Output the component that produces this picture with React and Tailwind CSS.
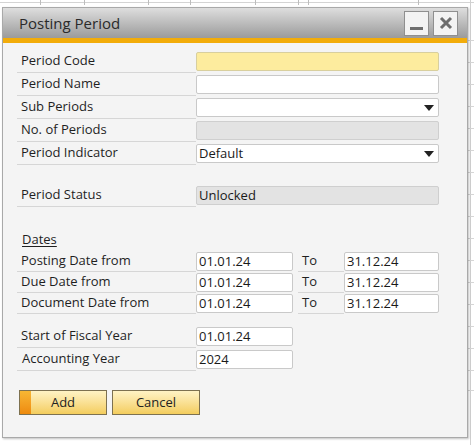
import React from 'react';

const font = { fontFamily: '"Open Sans", "Noto Sans", sans-serif' };

const Caret = () => (
    <svg width="10" height="6" viewBox="0 0 10 6" className="absolute right-[4px] top-1/2 -translate-y-1/2">
        <path d="M0 0 H10 L5 6 Z" fill="#222" />
    </svg>
);

const Field = ({ value, tone = 'white', select, className = '' }) => {
    const bg =
        tone === 'yellow' ? 'bg-[#fdec9e] border-[#d8cf9e]' : tone === 'gray' ? 'bg-[#e3e3e3] border-[#cfcfcf]' : 'bg-white border-[#c9c9c9]';
    return (
        <div className={`relative h-[19px] rounded-[2px] border ${bg} pl-[2px] text-[13px] leading-[17px] text-[#1a1a1a] ${className}`}>
            {value}
            {select && <Caret />}
        </div>
    );
};

const Label = ({ children, className = 'w-[179px]' }) => (
    <div className={`h-full flex items-center border-b border-[#d6d6d6] pl-[4px] text-[13px] text-[#1f1f1f] ${className}`}>
        {children}
    </div>
);

const Row = ({ label, h = 'h-[23px]', children }) => (
    <div className={`flex items-stretch ${h}`}>
        <div className="w-[14px]" />
        <Label>{label}</Label>
        <div className="flex items-center">{children}</div>
    </div>
);

const DateRow = ({ label, from, to }) => (
    <div className="flex items-stretch h-[21px]">
        <div className="w-[14px]" />
        <Label>{label}</Label>
        <div className="flex items-center">
            <Field value={from} className="w-[97px]" />
        </div>
        <div className="w-[5px]" />
        <Label className="w-[46px]">To</Label>
        <div className="flex items-center">
            <Field value={to} className="w-[95px]" />
        </div>
    </div>
);

const Button = ({ children, accent }) => (
    <div className="relative w-[88px] h-[25px] border border-[#7d7150] bg-gradient-to-b from-[#fff3c4] to-[#f4cd5c] flex items-center justify-center text-[13px] text-[#222]">
        {accent && <div className="absolute left-0 top-0 bottom-0 w-[11px] bg-gradient-to-b from-[#f7b733] to-[#ee8a0c]" />}
        <span className="relative">{children}</span>
    </div>
);

const App = () => {
    return (
        <div className="relative w-[474px] h-[445px] bg-white overflow-hidden" style={font}>
            {/* app table peeking out behind the window */}
            <div className="absolute left-0 right-0 top-[2px] h-px bg-[#d4d4d4]" />
            {[40, 84, 148, 190, 255, 298, 308, 418].map((x) => (
                <div key={x} className="absolute top-0 h-[5px] w-px bg-[#bdbdbd]" style={{ left: x }} />
            ))}
            <div className="absolute left-[470px] top-0 bottom-0 w-px bg-[#d0d0d0]" />
            {[40, 62, 84, 106, 128, 150, 172, 194, 216, 238, 260, 282, 304, 326, 348, 370, 390].map((y) => (
                <div key={y} className="absolute left-[467px] right-0 h-px bg-[#d6d6d6]" style={{ top: y }} />
            ))}

            <div className="absolute left-[2px] top-[7px] w-[466px] h-[431px] border border-[#a9a9a9] bg-[#f4f4f4] flex flex-col shadow-[1px_1px_2px_rgba(0,0,0,0.25)]">
                <div className="h-[30px] bg-gradient-to-b from-[#dedede] to-[#9b9b9b] flex items-center pl-[16px] pr-[9px]">
                    <span className="text-[15px] text-[#2a2a2a] flex-1">Posting Period</span>
                    <div className="w-[25px] h-[25px] border border-[#8f8f8f] bg-[#f3f3f3] flex items-end justify-center pb-[5px]">
                        <div className="w-[13px] h-[3px] bg-[#6e6e6e]" />
                    </div>
                    <div className="w-[25px] h-[25px] ml-[4px] border border-[#8f8f8f] bg-[#f3f3f3] flex items-center justify-center">
                        <svg width="14" height="14" viewBox="0 0 14 14">
                            <path d="M2 2 L12 12 M12 2 L2 12" stroke="#6e6e6e" strokeWidth="3" />
                        </svg>
                    </div>
                </div>
                <div className="h-[5px] bg-[#f2ac0a]" />

                <div className="flex flex-col pt-[7px]">
                    <Row label="Period Code">
                        <Field tone="yellow" className="w-[243px]" />
                    </Row>
                    <Row label="Period Name">
                        <Field className="w-[243px]" />
                    </Row>
                    <Row label="Sub Periods">
                        <Field className="w-[243px]" select />
                    </Row>
                    <Row label="No. of Periods">
                        <Field tone="gray" className="w-[243px]" />
                    </Row>
                    <Row label="Period Indicator">
                        <Field value="Default" className="w-[243px]" select />
                    </Row>

                    <div className="h-[19px]" />
                    <Row label="Period Status">
                        <Field tone="gray" value="Unlocked" className="w-[243px]" />
                    </Row>

                    <div className="h-[44px] flex items-end pl-[19px] pb-[2px]">
                        <span className="text-[13px] text-[#1f1f1f] underline underline-offset-2">Dates</span>
                    </div>
                    <DateRow label="Posting Date from" from="01.01.24" to="31.12.24" />
                    <DateRow label="Due Date from" from="01.01.24" to="31.12.24" />
                    <DateRow label="Document Date from" from="01.01.24" to="31.12.24" />

                    <div className="h-[11px]" />
                    <Row label="Start of Fiscal Year">
                        <Field value="01.01.24" className="w-[97px]" />
                    </Row>
                    <Row label={<span className="pl-[1px]">Accounting Year</span>}>
                        <Field value="2024" className="w-[97px]" />
                    </Row>

                    <div className="flex gap-[5px] pl-[16px] pt-[19px]">
                        <Button accent>Add</Button>
                        <Button>Cancel</Button>
                    </div>
                </div>
            </div>
        </div>
    );
};

export default App;
